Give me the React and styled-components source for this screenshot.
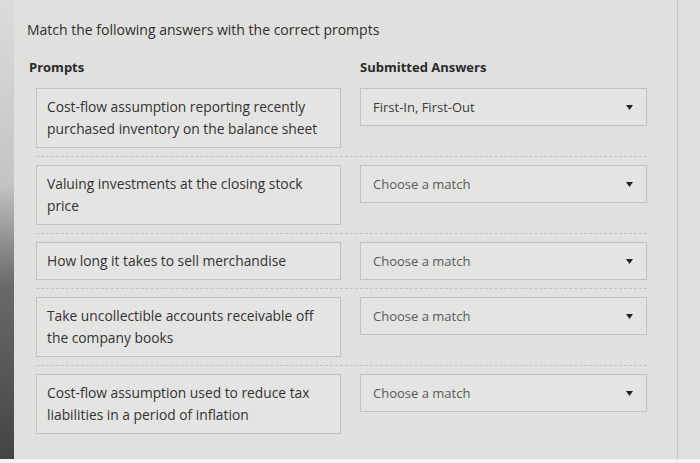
import React from "react";
import styled, { createGlobalStyle } from "styled-components";

const GlobalStyle = createGlobalStyle`
  html, body {
    margin: 0;
    padding: 0;
    background: #dfdfdd;
  }
  body {
    font-family: "Open Sans", "Noto Sans", sans-serif;
    color: #333;
  }
`;

const Screen = styled.div`
  display: flex;
  height: 463px;
  overflow: hidden;
  box-sizing: border-box;
  border-bottom: 4px solid #f3f3f2;
  background: #e0e0de;
`;

const Bezel = styled.div`
  width: 14px;
  flex-shrink: 0;
  background: linear-gradient(to bottom, #dcdcda 0%, #c4c4c2 40%, #6a6a6a 62%, #444 100%);
`;

const Panel = styled.main`
  width: 664px;
  flex-shrink: 0;
  box-sizing: border-box;
  padding: 20px 0 0 13px;
  border-right: 1px solid #c4c4c2;
`;

const Title = styled.h1`
  margin: 0;
  font-size: 14px;
  line-height: 20px;
  font-weight: 400;
  color: #2e2e2e;
`;

const HeaderRow = styled.div`
  display: grid;
  grid-template-columns: 331px auto;
  margin: 18px 0 12px 2px;
`;

const Heading = styled.h2`
  margin: 0;
  font-size: 13px;
  line-height: 18px;
  font-weight: 700;
  color: #2a2a2a;
`;

const List = styled.ul`
  margin: 0 0 0 9px;
  padding: 0;
  list-style: none;
  width: 611px;
`;

const Row = styled.li`
  display: grid;
  grid-template-columns: 305px 287px;
  column-gap: 19px;
  align-items: start;
  padding: ${(p) => (p.$first ? "0" : "8px")} 0 ${(p) => (p.$last ? "27px" : "8px")};
  border-bottom: 1px dashed #c3c3c1;
`;

const Prompt = styled.div`
  box-sizing: border-box;
  padding: 7px 20px 7px 10px;
  border: 1px solid #c2c2c0;
  background: #e4e4e2;
  font-size: 13.8px;
  line-height: 22px;
  color: #333;
`;

const Select = styled.button`
  display: flex;
  align-items: center;
  justify-content: space-between;
  height: 38px;
  box-sizing: border-box;
  padding: 0 13px 0 12px;
  border: 1px solid #c2c2c0;
  background: #e4e4e2;
  font-family: inherit;
  font-size: 13px;
  color: ${(p) => (p.$placeholder ? "#5a5a5a" : "#3a3a3a")};
  text-align: left;
  cursor: pointer;
`;

const Caret = () => (
  <svg width="7" height="5" viewBox="0 0 7 5" aria-hidden="true">
    <path d="M0 0 H7 L3.5 5 Z" fill="#222" />
  </svg>
);

const rows = [
  { prompt: "Cost-flow assumption reporting recently purchased inventory on the balance sheet", answer: "First-In, First-Out" },
  { prompt: "Valuing investments at the closing stock price", answer: null },
  { prompt: "How long it takes to sell merchandise", answer: null },
  { prompt: "Take uncollectible accounts receivable off the company books", answer: null },
  { prompt: "Cost-flow assumption used to reduce tax liabilities in a period of inflation", answer: null },
];

export default function App() {
  return (
    <>
      <GlobalStyle />
      <Screen>
        <Bezel />
        <Panel>
          <Title>Match the following answers with the correct prompts</Title>
          <HeaderRow>
            <Heading>Prompts</Heading>
            <Heading>Submitted Answers</Heading>
          </HeaderRow>
          <List>
            {rows.map((r, i) => (
              <Row key={i} $first={i === 0} $last={i === rows.length - 1}>
                <Prompt>{r.prompt}</Prompt>
                <Select type="button" $placeholder={!r.answer}>
                  <span>{r.answer || "Choose a match"}</span>
                  <Caret />
                </Select>
              </Row>
            ))}
          </List>
        </Panel>
      </Screen>
    </>
  );
}
